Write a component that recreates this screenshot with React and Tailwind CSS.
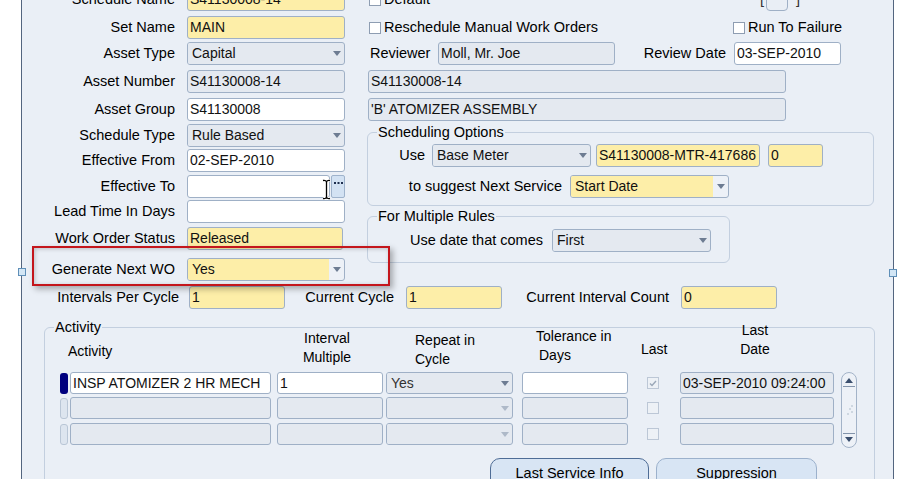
import React from 'react';

// Oracle-forms style "Maintenance Schedule" header, cropped at the top

const ff = "font-['Liberation_Sans',Arial,sans-serif]";

function Arrow({ color = '#6d7c92' }) {
  return (
    <svg width="8" height="5" viewBox="0 0 8 5">
      <polygon points="0,0 8,0 4,5" fill={color} />
    </svg>
  );
}

function Field({ value = '', tone = 'grey', w = '', h = 'h-[23px]', extra = '' }) {
  const bg = tone === 'yellow' ? 'bg-[#fdeea8]' : tone === 'white' ? 'bg-white' : 'bg-[#e4e9f0]';
  return (
    <div className={`${w} ${h} ${bg} ${extra} flex items-center border border-[#9fb0c6] rounded-[3px] pl-[2px] text-[14px] text-[#111] whitespace-nowrap overflow-hidden`}>
      {value}
    </div>
  );
}

function Select({ value = '', tone = 'grey', w = '', h = 'h-[23px]', arrow = '#6d7c92', text = 'text-[#111]' }) {
  const bg = tone === 'yellow' ? 'bg-[#fdeea8]' : 'bg-[#e4e9f0]';
  const outer = tone === 'yellow' ? 'bg-[#edf1f7]' : 'bg-[#e4e9f0]';
  return (
    <div className={`${w} ${h} ${outer} flex border border-[#9fb0c6] rounded-[3px] overflow-hidden`}>
      <div className={`flex-1 flex items-center pl-[4px] text-[14px] ${text} whitespace-nowrap ${bg}`}>{value}</div>
      <div className="w-[15px] flex items-center justify-center">
        <Arrow color={arrow} />
      </div>
    </div>
  );
}

function Check({ checked = false, disabled = false }) {
  return (
    <div className={`w-[12px] h-[12px] border flex items-center justify-center ${disabled ? 'border-[#bcc7d6] bg-[#edf1f6]' : 'border-[#8e9db2] bg-white'}`}>
      {checked && (
        <svg width="8" height="7" viewBox="0 0 8 7">
          <polyline points="1,3.5 3,5.5 7,1" fill="none" stroke="#9aa7b8" strokeWidth="1.4" />
        </svg>
      )}
    </div>
  );
}

function IBeam() {
  return (
    <svg width="9" height="21" viewBox="0 0 9 21">
      <path d="M1 1.5 Q4.5 1 4.5 3.5 Q4.5 1 8 1.5 M4.5 3.5 V17.5 M1 19.5 Q4.5 20 4.5 17.5 Q4.5 20 8 19.5" fill="none" stroke="#fff" strokeWidth="3" />
      <path d="M1 1.5 Q4.5 1 4.5 3.5 Q4.5 1 8 1.5 M4.5 3.5 V17.5 M1 19.5 Q4.5 20 4.5 17.5 Q4.5 20 8 19.5" fill="none" stroke="#000" strokeWidth="1.3" />
    </svg>
  );
}

function Label({ children, w = 'w-[153px]' }) {
  return <div className={`${w} text-right text-[14.5px] whitespace-nowrap`}>{children}</div>;
}

const leftRows = [
  { label: 'Schedule Name', mt: 'mt-0', el: <Field tone="yellow" value="S41130008-14" w="w-[158px]" /> },
  { label: 'Set Name', mt: 'mt-[5px]', el: <Field tone="yellow" value="MAIN" w="w-[158px]" /> },
  { label: 'Asset Type', mt: 'mt-[3px]', el: <Select value="Capital" w="w-[158px]" /> },
  { label: 'Asset Number', mt: 'mt-[5px]', el: <Field value="S41130008-14" w="w-[158px]" /> },
  { label: 'Asset Group', mt: 'mt-[5px]', el: <Field tone="white" value="S41130008" w="w-[158px]" /> },
  { label: 'Schedule Type', mt: 'mt-[3px]', el: <Select value="Rule Based" w="w-[158px]" /> },
  { label: 'Effective From', mt: 'mt-[2px]', el: <Field tone="white" value="02-SEP-2010" w="w-[158px]" /> },
  {
    label: 'Effective To',
    mt: 'mt-[3px]',
    el: (
      <div className="flex">
        <div className="relative">
          <Field tone="white" w="w-[143px]" />
          <div className="absolute left-[135px] top-[4px]">
            <IBeam />
          </div>
        </div>
        <div className="ml-[1px] w-[14px] h-[23px] border border-[#9fb3cc] rounded-[2px] bg-[#d3e2f3] flex justify-center pt-[6px]">
          <svg width="9" height="3" viewBox="0 0 9 3">
            <rect x="0" y="0" width="2" height="2" fill="#1f2f4f" />
            <rect x="3.5" y="0" width="2" height="2" fill="#1f2f4f" />
            <rect x="7" y="0" width="2" height="2" fill="#1f2f4f" />
          </svg>
        </div>
      </div>
    ),
  },
  { label: 'Lead Time In Days', mt: 'mt-[2px]', el: <Field tone="white" w="w-[158px]" /> },
  { label: 'Work Order Status', mt: 'mt-[4px]', el: <Field tone="yellow" value="Released" w="w-[156px]" /> },
  { label: 'Generate Next WO', mt: 'mt-[8px]', el: <Select tone="yellow" value="Yes" w="w-[158px]" /> },
];

function ScrollBar() {
  return (
    <div className="ml-[7px] w-[16px] h-[76px] border border-[#a3b3c8] rounded-[8px] bg-[#edf1f7] overflow-hidden">
      <svg width="14" height="74" viewBox="0 0 14 74">
        <polygon points="3,10 11,10 7,5" fill="#3b4f6e" />
        <line x1="1" y1="13.5" x2="13" y2="13.5" stroke="#8394ab" />
        <circle cx="10" cy="33" r="0.7" fill="#9aa8ba" />
        <circle cx="8" cy="36" r="0.7" fill="#9aa8ba" />
        <circle cx="10" cy="39" r="0.7" fill="#9aa8ba" />
        <circle cx="6" cy="41" r="0.7" fill="#9aa8ba" />
        <line x1="1" y1="60.5" x2="13" y2="60.5" stroke="#8394ab" />
        <polygon points="3,64 11,64 7,69" fill="#3b4f6e" />
      </svg>
    </div>
  );
}

function ActivityRow({ first = false, mt = 'mt-0' }) {
  return (
    <div className={`flex items-center pl-[15px] ${mt}`}>
      <div className={`w-[8px] h-[21px] rounded-[3px] ${first ? 'bg-[#00007f]' : 'bg-[#dde5ef] border border-[#b9c6d6]'}`} />
      <Field tone={first ? 'white' : 'grey'} value={first ? 'INSP ATOMIZER 2 HR MECH' : ''} w="w-[201px]" h="h-[22px]" extra="ml-[2px] text-[14.5px]" />
      <Field tone={first ? 'white' : 'grey'} value={first ? '1' : ''} w="w-[106px]" h="h-[22px]" extra="ml-[6px]" />
      <div className="ml-[3px]">
        <Select value={first ? 'Yes' : ''} w="w-[127px]" h="h-[22px]" arrow={first ? '#6d7c92' : '#aeb9c8'} text="text-[#333]" />
      </div>
      <Field tone={first ? 'white' : 'grey'} w="w-[106px]" h="h-[22px]" extra="ml-[9px]" />
      <div className="ml-[19px]">
        <Check disabled checked={first} />
      </div>
      <Field value={first ? '03-SEP-2010 09:24:00' : ''} w="w-[154px]" h="h-[22px]" extra="ml-[21px]" />
    </div>
  );
}

export default function App() {
  return (
    <div className={`relative w-[913px] h-[479px] overflow-hidden bg-white text-black ${ff}`}>
      <div className="ml-[21px] w-[873px] h-[479px] overflow-hidden border-x border-[#53657f] bg-[#eaeff6]">
        <div className="-mt-[12px]">
          <div className="flex">
            {/* left column */}
            <div className="w-[323px] flex flex-col">
              {leftRows.map((r) => (
                <div key={r.label} className={`flex items-center h-[23px] ${r.mt}`}>
                  <Label>{r.label}</Label>
                  <div className="ml-[12px]">{r.el}</div>
                </div>
              ))}
            </div>

            {/* right column */}
            <div className="ml-[22px] w-[507px] flex flex-col text-[14.5px]">
              <div className="flex items-center h-[23px]">
                <div className="w-[393px] flex items-center pl-[2px]">
                  <Check />
                  <span className="ml-[3px]">Default</span>
                </div>
                <div className="flex items-end self-stretch">
                  <span className="text-[#333]">[</span>
                  <div className="ml-[2px] w-[22px] h-[20px] border border-[#9fb0c6] rounded-b-[4px] bg-[#e9eef5]" />
                  <span className="ml-[8px] text-[#333]">]</span>
                </div>
              </div>
              <div className="flex items-center h-[23px] mt-[5px]">
                <div className="w-[366px] flex items-center pl-[2px]">
                  <Check />
                  <span className="ml-[3px]">Reschedule Manual Work Orders</span>
                </div>
                <Check />
                <span className="ml-[3px]">Run To Failure</span>
              </div>
              <div className="flex items-center h-[23px] mt-[3px]">
                <span className="pl-[3px] w-[71px]">Reviewer</span>
                <Field value="Moll, Mr. Joe" w="w-[177px]" />
                <div className="w-[111px] text-right">Review Date</div>
                <Field tone="white" value="03-SEP-2010" w="w-[107px]" extra="ml-[8px]" />
              </div>
              <Field value="S41130008-14" w="w-[418px]" extra="mt-[5px] ml-[1px]" />
              <Field value="'B' ATOMIZER ASSEMBLY" w="w-[418px]" extra="mt-[5px] ml-[1px]" />

              <fieldset className="mt-[3px] w-[507px] border border-[#c3cfdf] rounded-[6px] pb-[7px]">
                <legend className="ml-[9px] px-[1px] leading-[16px]">Scheduling Options</legend>
                <div className="flex items-center mt-[4px]">
                  <div className="w-[57px] text-right">Use</div>
                  <div className="ml-[7px]">
                    <Select value="Base Meter" w="w-[159px]" />
                  </div>
                  <Field tone="yellow" value="S41130008-MTR-417686" w="w-[164px]" extra="ml-[5px]" />
                  <Field tone="yellow" value="0" w="w-[55px]" extra="ml-[8px]" />
                </div>
                <div className="flex items-center mt-[8px]">
                  <div className="w-[194px] text-right">to suggest Next Service</div>
                  <div className="ml-[8px]">
                    <Select tone="yellow" value="Start Date" w="w-[159px]" />
                  </div>
                </div>
              </fieldset>

              <fieldset className="mt-[2px] w-[363px] border border-[#c3cfdf] rounded-[6px] pb-[10px]">
                <legend className="ml-[9px] px-[1px] leading-[16px]">For Multiple Rules</legend>
                <div className="flex items-center mt-[5px]">
                  <div className="w-[175px] text-right">Use date that comes</div>
                  <div className="ml-[9px]">
                    <Select value="First" w="w-[159px]" />
                  </div>
                </div>
              </fieldset>
            </div>
          </div>

          {/* cycle counters */}
          <div className="flex items-center h-[23px] mt-[5px] text-[14.5px]">
            <Label w="w-[157px]">Intervals Per Cycle</Label>
            <Field tone="yellow" value="1" w="w-[96px]" extra="ml-[10px]" />
            <Label w="w-[109px]">Current Cycle</Label>
            <Field tone="yellow" value="1" w="w-[96px]" extra="ml-[12px]" />
            <Label w="w-[167px]">Current Interval Count</Label>
            <Field tone="yellow" value="0" w="w-[96px]" extra="ml-[12px]" />
          </div>

          {/* activity block */}
          <fieldset className="mt-[10px] ml-[22px] w-[831px] border border-[#c3cfdf] rounded-[6px] pb-[20px]">
            <legend className="ml-[9px] px-[1px] text-[14.5px] leading-[16px]">Activity</legend>
            <div className="-mt-[14px] h-[51px] flex items-start text-[14px] leading-[19px]">
              <div className="w-[232px] pl-[23px] mt-[21px]">Activity</div>
              <div className="w-[100px] text-center mt-[8px]">
                <div>Interval</div>
                <div>Multiple</div>
              </div>
              <div className="ml-[9px] w-[127px] pl-[29px] mt-[10px]">
                <div>Repeat in</div>
                <div>Cycle</div>
              </div>
              <div className="ml-[9px] w-[106px] pl-[14px] mt-[6px]">
                <div>Tolerance in</div>
                <div className="pl-[3px]">Days</div>
              </div>
              <div className="w-[53px] pl-[13px] mt-[19px]">Last</div>
              <div className="w-[148px] text-center">
                <div>Last</div>
                <div>Date</div>
              </div>
            </div>

            <div className="flex items-start">
              <div className="flex flex-col">
                <ActivityRow first />
                <ActivityRow mt="mt-[3px]" />
                <ActivityRow mt="mt-[4px]" />
              </div>
              <ScrollBar />
            </div>

            <div className="mt-[10px] ml-[445px] flex gap-[7px] text-[14.5px] leading-[16px]">
              <div className="w-[159px] h-[28px] rounded-t-[10px] border border-[#4f6d96] bg-[#d8e5f4] text-center pt-[6px]">
                L<span className="underline">a</span>st Service Info
              </div>
              <div className="w-[161px] h-[28px] rounded-t-[10px] border border-[#9cb1cc] bg-[#d8e5f4] text-center pt-[6px]">
                <span className="underline">S</span>uppression
              </div>
            </div>
          </fieldset>
        </div>
      </div>

      {/* annotation + resize handles */}
      <div className="absolute left-[32px] top-[246px] w-[358px] h-[40px] border-2 border-[#c4161c] shadow-[3px_3px_6px_rgba(0,0,0,0.3),inset_1px_1px_4px_rgba(0,0,0,0.2)]" />
      <div className="absolute left-[18px] top-[268px] w-[8px] h-[8px] border border-[#5f8fb8] bg-[#d3e6f5]" />
      <div className="absolute left-[889px] top-[269px] w-[8px] h-[8px] border border-[#5f8fb8] bg-[#d3e6f5]" />
    </div>
  );
}
